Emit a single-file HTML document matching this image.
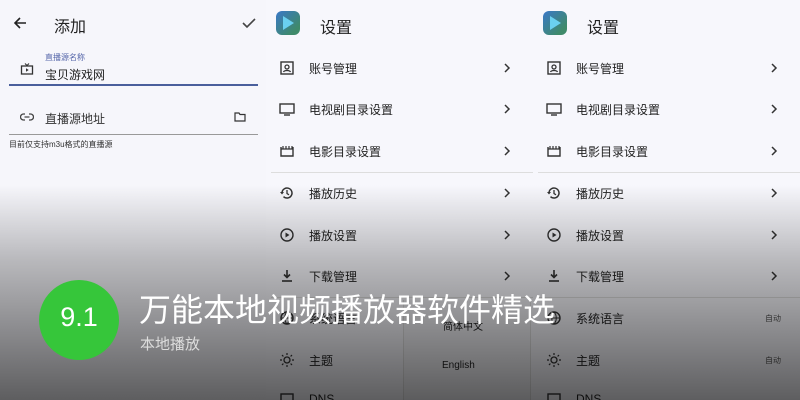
<!DOCTYPE html>
<html><head><meta charset="utf-8"><style>
*{margin:0;padding:0;box-sizing:border-box}
html,body{width:800px;height:400px;overflow:hidden}
body{background:#f6f6fb;font-family:"Liberation Sans","Noto Sans CJK SC",sans-serif;position:relative;color:#222}
.a{position:absolute;white-space:nowrap}
.panel{position:absolute;top:0;height:400px;width:267px;background:#f7f7fc}
.row{position:absolute;font-size:12px;color:#222}
.ic{position:absolute}
.ov{position:absolute;left:0;top:0;width:800px;height:400px;background:linear-gradient(to bottom,rgba(0,0,0,0) 0,rgba(0,0,0,0) 185px,rgba(0,0,0,0.25) 260px,rgba(0,0,0,0.62) 400px)}
</style></head><body>
<div class="panel" style="left:0;background:#f6f6fb">
 <svg class="ic" style="left:13px;top:16px" width="14" height="14" viewBox="0 0 14 14"><path d="M13 7H2M7 2L2 7l5 5" fill="none" stroke="#222" stroke-width="1.6"/></svg>
 <div class="a" style="left:54px;top:13px;font-size:16px">添加</div>
 <svg class="ic" style="left:242px;top:17px" width="14" height="12" viewBox="0 0 14 12"><path d="M1 6l4 4 8-8" fill="none" stroke="#444" stroke-width="1.6"/></svg>
 <div class="a" style="left:45px;top:52px;font-size:8px;color:#5566aa">直播源名称</div>
 <svg class="ic" style="left:20px;top:62px" width="14" height="14" viewBox="0 0 14 14"><rect x="1.5" y="4" width="11" height="8" fill="none" stroke="#333" stroke-width="1.3"/><path d="M6 6.3v3.4l2.7-1.7z" fill="#333"/><path d="M5 1.5l2 2 2-2" stroke="#333" fill="none" stroke-width="1.1"/></svg>
 <div class="a" style="left:45px;top:66px;font-size:12px">宝贝游戏网</div>
 <div class="a" style="left:9px;top:84px;width:249px;height:2px;background:#4a5f9c"></div>
 <svg class="ic" style="left:20px;top:112px" width="14" height="10" viewBox="0 0 14 10"><path d="M5 2H3.5a3 3 0 0 0 0 6H5M9 2h1.5a3 3 0 0 1 0 6H9M4.5 5h5" fill="none" stroke="#444" stroke-width="1.3"/></svg>
 <div class="a" style="left:45px;top:110px;font-size:12px;color:#333">直播源地址</div>
 <svg class="ic" style="left:234px;top:112px" width="12" height="10" viewBox="0 0 12 10"><path d="M1 1h4l1 1.5h5V9H1z" fill="none" stroke="#333" stroke-width="1.2"/></svg>
 <div class="a" style="left:9px;top:134px;width:249px;height:1px;background:#999"></div>
 <div class="a" style="left:9px;top:139px;font-size:8px;color:#333">目前仅支持m3u格式的直播源</div>
</div>

<div class="panel" style="left:266px">
 <div class="a" style="left:10px;top:11px;width:24px;height:24px;border-radius:6px;background:linear-gradient(135deg,#3a78c8,#3f8a6a 80%)"></div>
 <div class="a" style="left:17px;top:16px;width:0;height:0;border-left:11px solid #6ad0f0;border-top:7px solid transparent;border-bottom:7px solid transparent"></div>
 <div class="a" style="left:54px;top:14px;font-size:16px">设置</div>
</div>
<div class="panel" style="left:533px">
 <div class="a" style="left:10px;top:11px;width:24px;height:24px;border-radius:6px;background:linear-gradient(135deg,#3a78c8,#3f8a6a 80%)"></div>
 <div class="a" style="left:17px;top:16px;width:0;height:0;border-left:11px solid #6ad0f0;border-top:7px solid transparent;border-bottom:7px solid transparent"></div>
 <div class="a" style="left:54px;top:14px;font-size:16px">设置</div>
</div>

<div id="rows"></div>
<script>
var rows=[["账号管理",68,"acc"],["电视剧目录设置",109,"tv"],["电影目录设置",151,"film"],["播放历史",193,"hist"],["播放设置",235,"play"],["下载管理",276,"dl"],["系统语言",318,"lang"],["主题",360,"sun"],["DNS",400,"dns"]];
var icons={
acc:'<rect x="2" y="2" width="12" height="12" fill="none" stroke="#333" stroke-width="1.4"/><circle cx="8" cy="7" r="2" fill="none" stroke="#333" stroke-width="1.3"/><path d="M4.5 12c1-2 6-2 7 0" stroke="#333" fill="none" stroke-width="1.3"/>',
tv:'<rect x="1" y="3" width="14" height="9" fill="none" stroke="#333" stroke-width="1.4"/><path d="M5 14h6" stroke="#333" stroke-width="1.4"/>',
film:'<path d="M2 4v9h12V4" fill="none" stroke="#333" stroke-width="1.4"/><path d="M2 6h12M4 3v3M7 3v3M10 3v3M13 3v3" stroke="#333" stroke-width="1.2"/>',
hist:'<path d="M3 8a5 5 0 1 1 1.5 3.6" fill="none" stroke="#333" stroke-width="1.5"/><path d="M1 7l2 2.5L5 7" fill="#333"/><path d="M8 5v3.5l2 1.3" stroke="#333" fill="none" stroke-width="1.3"/>',
play:'<circle cx="8" cy="8" r="6" fill="none" stroke="#333" stroke-width="1.4"/><path d="M6.5 5.5v5l4-2.5z" fill="#333"/>',
dl:'<path d="M8 2v7M5 6.5l3 3 3-3" stroke="#333" fill="none" stroke-width="1.6"/><path d="M3 13h10" stroke="#333" stroke-width="1.6"/>',
lang:'<circle cx="8" cy="8" r="6" fill="none" stroke="#333" stroke-width="1.4"/><path d="M2 8h12M8 2c-3 3-3 9 0 12M8 2c3 3 3 9 0 12" stroke="#333" fill="none"/>',
sun:'<circle cx="8" cy="8" r="3" fill="none" stroke="#333" stroke-width="1.3"/><path d="M8 1v2M8 13v2M1 8h2M13 8h2M3 3l1.4 1.4M11.6 11.6L13 13M3 13l1.4-1.4M11.6 4.4L13 3" stroke="#333" stroke-width="1.2"/>',
dns:'<rect x="2" y="2" width="12" height="12" fill="none" stroke="#333" stroke-width="1.4"/>'};
var h='';
[266,533].forEach(function(o,pi){
 rows.forEach(function(r){
  var y=r[1];
  h+='<svg class="ic" style="left:'+(o+13)+'px;top:'+(y-8)+'px" width="16" height="16" viewBox="0 0 16 16">'+icons[r[2]]+'</svg>';
  h+='<div class="row a" style="left:'+(o+43)+'px;top:'+(y-8)+'px">'+r[0]+'</div>';
  if(y<=276) h+='<svg class="ic" style="left:'+(o+237)+'px;top:'+(y-5)+'px" width="8" height="10" viewBox="0 0 8 10"><path d="M2 1l4 4-4 4" fill="none" stroke="#333" stroke-width="1.5"/></svg>';
  else if(pi==1 && y<400) h+='<div class="a" style="left:'+(o+232)+'px;top:'+(y-5)+'px;font-size:8px;color:#555">自动</div>';
 });
 h+='<div class="a" style="left:'+(o+5)+'px;top:172px;width:262px;height:1px;background:#ddd"></div>';
 h+='<div class="a" style="left:'+(o+5)+'px;top:297px;width:262px;height:1px;background:#ddd"></div>';
});
h+='<div class="a" style="left:403px;top:300px;width:128px;height:100px;background:#f2f2f6;border-left:1px solid #ddd;border-right:1px solid #ddd"></div>';
h+='<div class="a" style="left:443px;top:318px;font-size:10px;color:#222">简体中文</div>';
h+='<div class="a" style="left:442px;top:360px;font-size:10px;color:#222">English</div>';
document.getElementById('rows').innerHTML=h;
</script>
<div class="ov"></div>
<div class="a" style="left:39px;top:280px;width:80px;height:80px;border-radius:50%;background:#36c63a"></div>
<div class="a" style="left:39px;top:302px;width:80px;text-align:center;font-size:27px;color:#fff">9.1</div>
<div class="a" style="left:139px;top:285px;font-size:32px;color:#fff;letter-spacing:0px">万能本地视频播放器软件精选</div>
<div class="a" style="left:140px;top:333px;font-size:15px;color:#ddd">本地播放</div>
</body></html>
